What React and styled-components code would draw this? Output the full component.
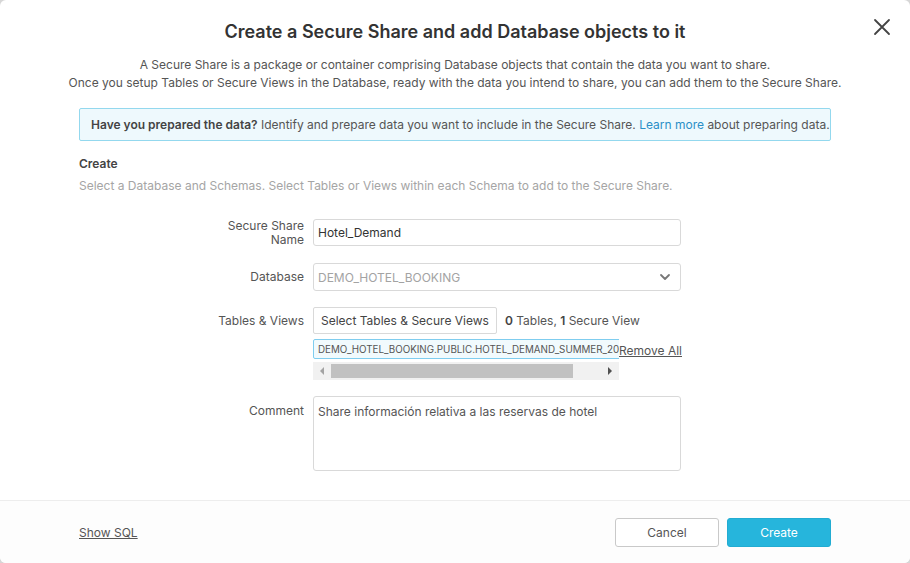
import styled, { createGlobalStyle } from 'styled-components';

const GlobalStyle = createGlobalStyle`
  html, body {
    margin: 0;
    padding: 0;
    height: 100%;
    background: #d6d6d6;
  }
  body {
    font-family: Inter, "Noto Sans", sans-serif;
    color: #333;
  }
  #root {
    height: 100%;
  }
`;

function CloseIcon() {
  return (
    <svg width="18" height="18" viewBox="0 0 18 18">
      <path d="M2 2 L16 16 M16 2 L2 16" stroke="#444" strokeWidth="1.8" strokeLinecap="round" fill="none" />
    </svg>
  );
}

function Chevron() {
  return (
    <svg width="12" height="12" viewBox="0 0 12 12">
      <path d="M2 4 L6 8 L10 4" stroke="#777" strokeWidth="1.8" fill="none" strokeLinecap="round" strokeLinejoin="round" />
    </svg>
  );
}

function App() {
  return (
    <>
      <GlobalStyle />
      <Modal>
        <CloseButton aria-label="close">
          <CloseIcon />
        </CloseButton>
        <Body>
          <Title>Create a Secure Share and add Database objects to it</Title>
          <Description>
            A Secure Share is a package or container comprising Database objects that contain the data you want to share.
            <br />
            Once you setup Tables or Secure Views in the Database, ready with the data you intend to share, you can add them to the Secure Share.
          </Description>
          <InfoBox>
            <b>Have you prepared the data?</b> Identify and prepare data you want to include in the Secure Share.{' '}
            <InfoLink>Learn more</InfoLink> about preparing data.
          </InfoBox>
          <SectionTitle>Create</SectionTitle>
          <SectionHint>Select a Database and Schemas. Select Tables or Views within each Schema to add to the Secure Share.</SectionHint>

          <Form>
            <Label>
              Secure Share
              <br />
              Name
            </Label>
            <TextInput defaultValue="Hotel_Demand" />

            <Label $center>Database</Label>
            <Select>
              <span>DEMO_HOTEL_BOOKING</span>
              <Chevron />
            </Select>

            <Label $top={7}>Tables &amp; Views</Label>
            <TablesCell>
              <TablesRow>
                <OutlineButton>Select Tables &amp; Secure Views</OutlineButton>
                <Count>
                  <b>0</b> Tables, <b>1</b> Secure View
                </Count>
              </TablesRow>
              <ChipRow>
                <ChipScroller>
                  <Chip>DEMO_HOTEL_BOOKING.PUBLIC.HOTEL_DEMAND_SUMMER_2019</Chip>
                </ChipScroller>
                <RemoveAll>Remove All</RemoveAll>
              </ChipRow>
              <ScrollTrack>
                <Arrow $dir="left" />
                <Thumb />
                <Arrow $dir="right" />
              </ScrollTrack>
            </TablesCell>

            <Label $top={8}>Comment</Label>
            <TextArea defaultValue="Share información relativa a las reservas de hotel" />
          </Form>
        </Body>
        <Footer>
          <ShowSql>Show SQL</ShowSql>
          <Actions>
            <CancelButton>Cancel</CancelButton>
            <CreateButton>Create</CreateButton>
          </Actions>
        </Footer>
      </Modal>
    </>
  );
}
export default App;

const Modal = styled.div`
  position: relative;
  height: 100%;
  display: flex;
  flex-direction: column;
  background: #fff;
  border-radius: 6px;
  overflow: hidden;
`;
const CloseButton = styled.button`
  position: absolute;
  top: 18px;
  right: 19px;
  border: 0;
  padding: 0;
  background: none;
  display: flex;
  cursor: pointer;
`;
const Body = styled.div`
  flex: 1;
  padding: 20px 79px 0 79px;
  display: flex;
  flex-direction: column;
`;
const Title = styled.h1`
  margin: 0;
  font-size: 18px;
  line-height: 24px;
  font-weight: 600;
  color: #333;
  text-align: center;
`;
const Description = styled.p`
  margin: 12px -70px 0;
  font-size: 12px;
  line-height: 18px;
  color: #555;
  text-align: center;
  white-space: nowrap;
`;
const InfoBox = styled.div`
  margin-top: 16px;
  height: 33px;
  box-sizing: border-box;
  display: flex;
  align-items: center;
  padding: 0 11px;
  background: #eef9fd;
  border: 1px solid #93d8ee;
  border-radius: 2px;
  font-size: 12px;
  color: #555;
  white-space: pre;
  b {
    color: #444;
    font-weight: 600;
  }
`;
const InfoLink = styled.a`
  color: #2a8fc7;
  cursor: pointer;
`;
const SectionTitle = styled.div`
  margin-top: 14px;
  font-size: 12px;
  line-height: 18px;
  font-weight: 600;
  color: #444;
`;
const SectionHint = styled.div`
  margin-top: 4px;
  font-size: 12px;
  line-height: 18px;
  color: #a5a5a5;
`;
const Form = styled.div`
  margin-top: 24px;
  display: grid;
  grid-template-columns: 225px 368px;
  column-gap: 9px;
  row-gap: 16px;
  align-items: start;
`;
const Label = styled.div`
  text-align: right;
  font-size: 12px;
  line-height: 14px;
  color: #555;
  padding-top: ${(p) => (p.$top ? `${p.$top}px` : '0')};
  align-self: ${(p) => (p.$center ? 'center' : 'start')};
`;
const TextInput = styled.input`
  box-sizing: border-box;
  height: 27px;
  width: 100%;
  border: 1px solid #d9d9d9;
  border-radius: 3px;
  padding: 0 4px;
  font-family: inherit;
  font-size: 12px;
  color: #333;
  outline: none;
`;
const Select = styled.div`
  box-sizing: border-box;
  height: 28px;
  border: 1px solid #d9d9d9;
  border-radius: 3px;
  padding: 0 9px 0 4px;
  display: flex;
  align-items: center;
  justify-content: space-between;
  font-size: 12px;
  color: #a3a3a3;
`;
const TablesCell = styled.div`
  display: flex;
  flex-direction: column;
`;
const TablesRow = styled.div`
  display: flex;
  align-items: center;
  gap: 8px;
`;
const OutlineButton = styled.button`
  box-sizing: border-box;
  height: 27px;
  padding: 0 7px;
  background: #fff;
  border: 1px solid #d9d9d9;
  border-radius: 2px;
  font-family: inherit;
  font-size: 12px;
  color: #444;
`;
const Count = styled.span`
  font-size: 12px;
  color: #555;
  b {
    font-weight: 600;
    color: #444;
  }
`;
const ChipRow = styled.div`
  margin-top: 5px;
  display: flex;
  align-items: center;
`;
const ChipScroller = styled.div`
  width: 306px;
  display: flex;
  overflow: hidden;
  flex-shrink: 0;
`;
const Chip = styled.div`
  box-sizing: border-box;
  height: 20px;
  display: flex;
  flex-shrink: 0;
  align-items: center;
  padding: 0 4px;
  background: #f1fafd;
  border: 1px solid #7fcdef;
  border-radius: 2px;
  font-size: 9.8px;
  color: #555;
  white-space: nowrap;
`;
const RemoveAll = styled.a`
  font-size: 12px;
  color: #555;
  text-decoration: underline;
  white-space: nowrap;
  margin-top: 2px;
  cursor: pointer;
`;
const ScrollTrack = styled.div`
  margin-top: 3px;
  width: 306px;
  height: 18px;
  background: #f1f1f1;
  display: flex;
  align-items: center;
`;
const Arrow = styled.div`
  width: 18px;
  height: 18px;
  display: flex;
  align-items: center;
  justify-content: center;
  &::after {
    content: '';
    border-top: 4px solid transparent;
    border-bottom: 4px solid transparent;
    ${(p) =>
      p.$dir === 'left'
        ? 'border-right: 4px solid #a3a3a3;'
        : 'border-left: 4px solid #505050;'}
  }
`;
const Thumb = styled.div`
  width: 242px;
  height: 14px;
  background: #c1c1c1;
  margin-right: 28px;
`;
const TextArea = styled.textarea`
  box-sizing: border-box;
  width: 100%;
  height: 75px;
  resize: none;
  border: 1px solid #d9d9d9;
  border-radius: 3px;
  padding: 7px 4px;
  font-family: inherit;
  font-size: 12px;
  color: #555;
  outline: none;
`;
const Footer = styled.div`
  height: 62px;
  border-top: 1px solid #ededed;
  background: #fdfdfd;
  display: flex;
  align-items: center;
  justify-content: space-between;
  padding: 0 79px;
`;
const ShowSql = styled.a`
  font-size: 12px;
  color: #555;
  text-decoration: underline;
  cursor: pointer;
`;
const Actions = styled.div`
  display: flex;
  gap: 8px;
`;
const CancelButton = styled.button`
  box-sizing: border-box;
  width: 104px;
  height: 29px;
  background: #fff;
  border: 1px solid #c9c9c9;
  border-radius: 3px;
  font-family: inherit;
  font-size: 12px;
  color: #555;
`;
const CreateButton = styled.button`
  box-sizing: border-box;
  width: 104px;
  height: 29px;
  background: #26b5dc;
  border: 1px solid #22acd2;
  border-radius: 3px;
  font-family: inherit;
  font-size: 12px;
  color: #fff;
`;
